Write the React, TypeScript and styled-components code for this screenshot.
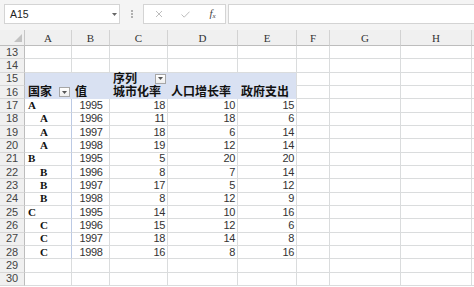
import React from 'react';
import styled, { createGlobalStyle, css } from 'styled-components';

const GlobalStyle = createGlobalStyle`
  html, body { margin: 0; padding: 0; background: #fff; overflow: hidden; }
  #root { width: 474px; height: 287px; }
`;

const BLUE = '#d9e1f2';
const GRID = '#dadcdd';

const Frame = styled.div`
  width: 474px;
  height: 287px;
  overflow: hidden;
  display: flex;
  flex-direction: column;
  background: #fff;
  font-family: "Liberation Sans", Arial, sans-serif;
`;

const Toolbar = styled.div`
  height: 30px;
  flex: none;
  box-sizing: border-box;
  background: #f4f4f4;
  display: flex;
  align-items: flex-start;
  padding: 4px 0 0 4px;
`;

const NameBox = styled.div`
  width: 116px;
  height: 20px;
  box-sizing: border-box;
  background: #fff;
  border: 1px solid #d4d4d4;
  display: flex;
  align-items: center;
  justify-content: space-between;
  padding: 0 2px 0 5px;
  font-size: 10.5px;
  color: #222;
`;

const Grip = styled.div`
  width: 23px;
  height: 20px;
  display: flex;
  flex-direction: column;
  align-items: center;
  justify-content: center;
  gap: 1.5px;
`;

const GripDot = styled.span`
  width: 2px;
  height: 1.5px;
  background: #b0b0b0;
`;

const IconBox = styled.div`
  width: 83px;
  height: 20px;
  box-sizing: border-box;
  background: #fff;
  border: 1px solid #d4d4d4;
  display: grid;
  grid-template-columns: repeat(3, 27px);
  padding-left: 1px;
  align-items: center;
  justify-items: center;
`;

const Fx = styled.span`
  font-family: "Liberation Serif", "Times New Roman", serif;
  font-style: italic;
  font-size: 11px;
  color: #444;
  line-height: 1;
  sub { font-size: 7px; vertical-align: -1px; }
`;

const FormulaBox = styled.div`
  flex: 1;
  height: 20px;
  margin-left: 2px;
  box-sizing: border-box;
  background: #fff;
  border: 1px solid #d4d4d4;
  border-right: none;
`;

const Sheet = styled.div`
  flex: 1;
  display: grid;
  grid-template-columns: 25px 47px 38px 58px 70px 59px 33px 71px 71px 1fr;
  grid-template-rows: 16px repeat(18, 13.333px);
`;

const Corner = styled.div`
  background: #f0f0f0;
  border-right: 1px solid #c6c6c6;
  border-bottom: 1px solid #bdbdbd;
  display: flex;
  align-items: flex-end;
  justify-content: flex-end;
  padding: 0 2px 3px 0;
`;

const ColHeader = styled.div`
  background: #f0f0f0;
  border-right: 1px solid #d2d2d2;
  border-bottom: 1px solid #bdbdbd;
  display: flex;
  align-items: center;
  justify-content: center;
  font-family: "Liberation Serif", "Times New Roman", serif;
  font-size: 11px;
  color: #333;
  padding-top: 1px;
`;

const RowHeader = styled.div`
  background: #f0f0f0;
  border-right: 1px solid #bdbdbd;
  border-bottom: 1px solid #d8d8d8;
  display: flex;
  align-items: center;
  justify-content: center;
  font-size: 11px;
  color: #444;
  line-height: 1;
`;

type Align = 'left' | 'right' | 'center';
type Kind = 'num' | 'head' | 'item' | 'blank';

const Cell = styled.div<{ $blue?: boolean; $align?: Align; $kind?: Kind; $indent?: boolean; $pivotEdge?: boolean; $blueRight?: boolean }>`
  box-sizing: border-box;
  min-width: 0;
  overflow: hidden;
  white-space: nowrap;
  border-right: 1px solid ${GRID};
  border-bottom: 1px solid ${GRID};
  display: flex;
  align-items: center;
  justify-content: ${(p) => (p.$align === 'right' ? 'flex-end' : p.$align === 'center' ? 'center' : 'flex-start')};
  padding: 0 2px 0 3px;
  line-height: 1;
  color: #333;
  font-size: 11px;
  letter-spacing: -0.4px;
  ${(p) => p.$blue && css`
    background: ${BLUE};
    border-bottom-color: ${BLUE};
    border-right-color: ${p.$blueRight ? GRID : BLUE};
  `}
  ${(p) => p.$pivotEdge && css`
    border-right-color: #bccae4;
  `}
  ${(p) => p.$kind === 'head' && css`
    overflow: visible;
    font-family: "Noto Sans CJK SC", "Liberation Sans", sans-serif;
    font-weight: 600;
    font-size: 12px;
    letter-spacing: 0;
    color: #111;
    justify-content: space-between;
    padding: 0 1px 0 3px;
    align-items: flex-end;
  `}
  ${(p) => p.$kind === 'item' && css`
    font-family: "Liberation Serif", "Times New Roman", serif;
    font-weight: 700;
    font-size: 11px;
    letter-spacing: 0;
    color: #111;
    padding-left: ${p.$indent ? '15px' : '3px'};
  `}
`;

const HeadText = styled.span`
  line-height: 12px;
  padding-bottom: 1px;
`;

const DropButton = styled.span`
  flex: none;
  width: 11px;
  height: 10px;
  box-sizing: border-box;
  border: 1px solid #a6a6a6;
  background: linear-gradient(#ffffff, #eeeeee);
  display: flex;
  align-items: center;
  justify-content: center;
  align-self: center;
`;

const Caret = ({ color = '#555' }: { color?: string }) => (
  <svg width="5" height="3" viewBox="0 0 5 3"><polygon points="0,0 5,0 2.5,3" fill={color} /></svg>
);

const COL_LETTERS = ['A', 'B', 'C', 'D', 'E', 'F', 'G', 'H'];

type DataRow = [string, number, number, number, number, boolean];
const DATA: DataRow[] = [
  ['A', 1995, 18, 10, 15, false],
  ['A', 1996, 11, 18, 6, true],
  ['A', 1997, 18, 6, 14, true],
  ['A', 1998, 19, 12, 14, true],
  ['B', 1995, 5, 20, 20, false],
  ['B', 1996, 8, 7, 14, true],
  ['B', 1997, 17, 5, 12, true],
  ['B', 1998, 8, 12, 9, true],
  ['C', 1995, 14, 10, 16, false],
  ['C', 1996, 15, 12, 6, true],
  ['C', 1997, 18, 14, 8, true],
  ['C', 1998, 16, 8, 16, true],
];

const blanks = (row: number, from: number) => {
  const out: React.ReactNode[] = [];
  for (let i = from; i < 9; i++) out.push(<Cell key={`${row}-${i}`} />);
  return out;
};

const renderRow = (r: number) => {
  const cells: React.ReactNode[] = [<RowHeader key={`h${r}`}>{r}</RowHeader>];
  if (r === 15) {
    cells.push(<Cell key="15a" $blue />);
    cells.push(<Cell key="15b" $blue />);
    cells.push(
      <Cell key="15c" $blue $kind="head">
        <HeadText>序列</HeadText>
        <DropButton><Caret /></DropButton>
      </Cell>
    );
    cells.push(<Cell key="15d" $blue />);
    cells.push(<Cell key="15e" $blue $blueRight />);
    cells.push(...blanks(r, 5));
  } else if (r === 16) {
    cells.push(
      <Cell key="16a" $blue $kind="head">
        <HeadText>国家</HeadText>
        <DropButton><Caret /></DropButton>
      </Cell>
    );
    cells.push(<Cell key="16b" $blue $kind="head"><HeadText>值</HeadText></Cell>);
    cells.push(<Cell key="16c" $blue $kind="head"><HeadText>城市化率</HeadText></Cell>);
    cells.push(<Cell key="16d" $blue $kind="head"><HeadText>人口增长率</HeadText></Cell>);
    cells.push(<Cell key="16e" $blue $blueRight $kind="head"><HeadText>政府支出</HeadText></Cell>);
    cells.push(...blanks(r, 5));
  } else if (r >= 17 && r <= 28) {
    const [name, year, c, d, e, indent] = DATA[r - 17];
    cells.push(<Cell key={`${r}a`} $kind="item" $indent={indent} $pivotEdge>{name}</Cell>);
    cells.push(<Cell key={`${r}b`} $align="center">{year}</Cell>);
    cells.push(<Cell key={`${r}c`} $align="right">{c}</Cell>);
    cells.push(<Cell key={`${r}d`} $align="right">{d}</Cell>);
    cells.push(<Cell key={`${r}e`} $align="right">{e}</Cell>);
    cells.push(...blanks(r, 5));
  } else {
    cells.push(...blanks(r, 0));
  }
  return cells;
};

export default function App() {
  const rows: number[] = [];
  for (let r = 13; r <= 30; r++) rows.push(r);
  return (
    <Frame>
      <GlobalStyle />
      <Toolbar>
        <NameBox>
          <span>A15</span>
          <Caret color="#666" />
        </NameBox>
        <Grip>
          <GripDot />
          <GripDot />
          <GripDot />
        </Grip>
        <IconBox>
          <svg width="8" height="8" viewBox="0 0 8 8">
            <path d="M1 1 L7 7 M7 1 L1 7" stroke="#bdbdbd" strokeWidth="1" fill="none" />
          </svg>
          <svg width="9" height="7" viewBox="0 0 9 7">
            <path d="M0.5 3.5 L3.2 6.2 L8.5 0.7" stroke="#bdbdbd" strokeWidth="1" fill="none" />
          </svg>
          <Fx>f<sub>x</sub></Fx>
        </IconBox>
        <FormulaBox />
      </Toolbar>
      <Sheet>
        <Corner>
          <svg width="8" height="8" viewBox="0 0 8 8"><polygon points="8,0 8,8 0,8" fill="#c2c2c2" /></svg>
        </Corner>
        {COL_LETTERS.map((l) => (
          <ColHeader key={l}>{l}</ColHeader>
        ))}
        <ColHeader />
        {rows.map((r) => renderRow(r))}
      </Sheet>
    </Frame>
  );
}
